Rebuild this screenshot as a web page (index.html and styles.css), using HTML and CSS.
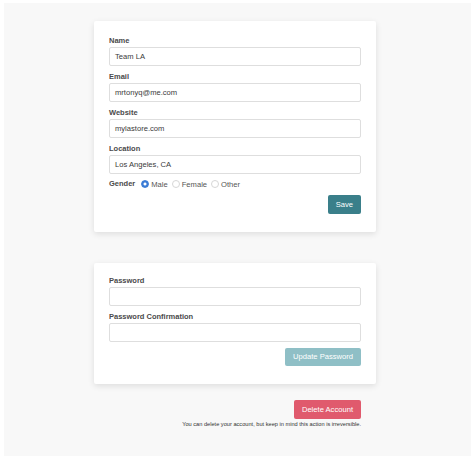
FILE: index.html
```html
<!DOCTYPE html>
<html>
<head>
<meta charset="utf-8">
<link rel="stylesheet" href="styles.css">
</head>
<body>
<div class="page">
  <div class="column">
    <form class="card">
      <div class="field">
        <label class="label">Name</label>
        <div class="input">Team LA</div>
      </div>
      <div class="field">
        <label class="label">Email</label>
        <div class="input">mrtonyq@me.com</div>
      </div>
      <div class="field">
        <label class="label">Website</label>
        <div class="input">mylastore.com</div>
      </div>
      <div class="field">
        <label class="label">Location</label>
        <div class="input">Los Angeles, CA</div>
      </div>
      <div class="gender">
        <span class="label">Gender</span>
        <span class="radio checked"></span><span class="opt">Male</span>
        <span class="radio"></span><span class="opt">Female</span>
        <span class="radio"></span><span class="opt">Other</span>
      </div>
      <div class="actions">
        <span class="btn save">Save</span>
      </div>
    </form>

    <form class="card card2">
      <div class="field">
        <label class="label">Password</label>
        <div class="input"></div>
      </div>
      <div class="field">
        <label class="label">Password Confirmation</label>
        <div class="input"></div>
      </div>
      <div class="actions">
        <span class="btn update">Update Password</span>
      </div>
    </form>

    <div class="danger">
      <span class="btn delete">Delete Account</span>
      <p class="note">You can delete your account, but keep in mind this action is irreversible.</p>
    </div>
  </div>
</div>
</body>
</html>
```

FILE: styles.css
```css
html, body {
  margin: 0;
  padding: 0;
  background: #ffffff;
}
body {
  font-family: "Liberation Sans", Arial, sans-serif;
  color: #444;
}
.page {
  margin: 3px 3px 4px 4px;
  height: 453px;
  background: #f8f8f8;
  display: flex;
  justify-content: center;
}
.column {
  width: 282px;
  padding-top: 18px;
  margin-left: -5px;
}
.card {
  background: #fff;
  border-radius: 2px;
  box-shadow: 0 2px 6px rgba(0,0,0,0.11);
  padding: 15px 15px 18px;
  display: flex;
  flex-direction: column;
}
.card2 {
  margin-top: 31px;
  padding-top: 13px;
  padding-bottom: 18px;
}
.field {
  display: flex;
  flex-direction: column;
  margin-bottom: 6px;
}
.label {
  font-size: 7.5px;
  font-weight: bold;
  color: #4a4a4a;
  line-height: 10px;
  margin-bottom: 1px;
}
.input {
  height: 17px;
  border: 1px solid #dedede;
  border-radius: 2px;
  font-size: 7.6px;
  line-height: 17px;
  padding: 0 5px;
  color: #3a3a3a;
}
.gender {
  display: flex;
  align-items: center;
  height: 10px;
  margin-top: -1px;
}
.gender .label {
  margin: 0 6px 0 0;
}
.radio {
  width: 6px;
  height: 6px;
  border: 1px solid #d6d6d6;
  border-radius: 50%;
  margin-right: 2px;
  box-sizing: content-box;
}
.radio.checked {
  border-color: #3a7bd5;
  background: radial-gradient(circle, #ffffff 0 1.2px, #3a7bd5 1.8px);
}
.opt {
  font-size: 7.6px;
  color: #555;
  margin-right: 4px;
}
.actions {
  display: flex;
  justify-content: flex-end;
  margin-top: 6px;
}
.card2 .actions {
  margin-top: 0;
}
.btn {
  display: inline-block;
  height: 19px;
  line-height: 19px;
  padding: 0 8px;
  border-radius: 2px;
  color: #fff;
  font-size: 7.6px;
}
.save {
  background: #3a7f8a;
}
.update {
  background: #8fbfc6;
  height: 18px;
  line-height: 18px;
}
.delete {
  background: #e05a6d;
}
.danger {
  margin-top: 16px;
  padding-right: 15px;
  display: flex;
  flex-direction: column;
  align-items: flex-end;
}
.note {
  margin: 2px 0 0;
  font-size: 5.65px;
  color: #333;
}
```
